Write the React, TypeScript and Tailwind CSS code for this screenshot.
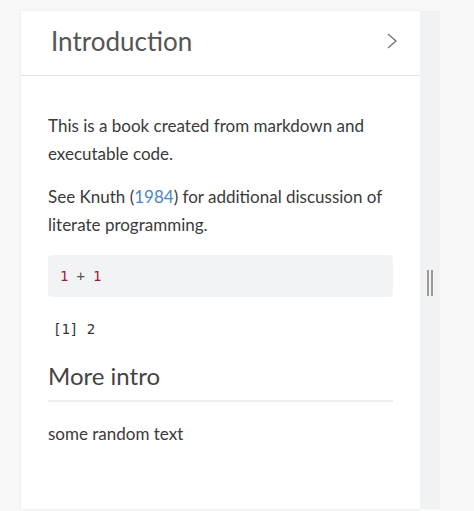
export default function App() {
  return (
    <div className="flex h-[511px] w-[474px] bg-[#f8f8f9] pt-[11px] pl-[21px] font-['Lato',sans-serif] text-[#3a3a3a]">
      {/* book panel */}
      <div className="flex h-[498px] w-[399px] flex-col bg-white shadow-[0_0_3px_rgba(0,0,0,0.08)]">
        <div className="flex h-[65px] items-center justify-between border-b border-[#e3e3e3] pb-[4px] pl-[30px] pr-[22px]">
          <h1 className="text-[26px] leading-none text-[#555]">Introduction</h1>
          <svg width="12" height="18" viewBox="0 0 12 18" fill="none" stroke="#777" strokeWidth="1.4">
            <path d="M2 2l8 7-8 7" />
          </svg>
        </div>
        <div className="px-[27px] pt-[36px] text-[17px] leading-[28px]">
          <p>This is a book created from markdown and executable code.</p>
          <p className="mt-[15px]">
            See Knuth (<a className="text-[#4a86c8]">1984</a>) for additional discussion of literate programming.
          </p>
          <div className="mt-[16px] flex h-[42px] w-[345px] items-center rounded bg-[#f1f3f5] px-[12px] font-['DejaVu_Sans_Mono',monospace] text-[14px]">
            <span className="text-[#a0183c]">1</span>
            <span className="px-[8px] text-[#555]">+</span>
            <span className="text-[#a0183c]">1</span>
          </div>
          <div className="mt-[20px] pl-[5px] font-['DejaVu_Sans_Mono',monospace] text-[14px] leading-[24px] text-[#333]">[1] 2</div>
          <h2 className="mt-[20px] w-[345px] border-b-2 border-[#eceef0] pb-[9px] text-[24px] leading-[30px] text-[#444]">More intro</h2>
          <p className="mt-[18px]">some random text</p>
        </div>
      </div>
      {/* resize gutter */}
      <div className="flex h-[498px] w-[20px] items-center justify-center bg-[#f1f2f4]">
        <div className="flex gap-[2px] pt-[46px]">
          <div className="h-[26px] w-[2px] bg-[#999]" />
          <div className="h-[26px] w-[2px] bg-[#999]" />
        </div>
      </div>
    </div>
  )
}
